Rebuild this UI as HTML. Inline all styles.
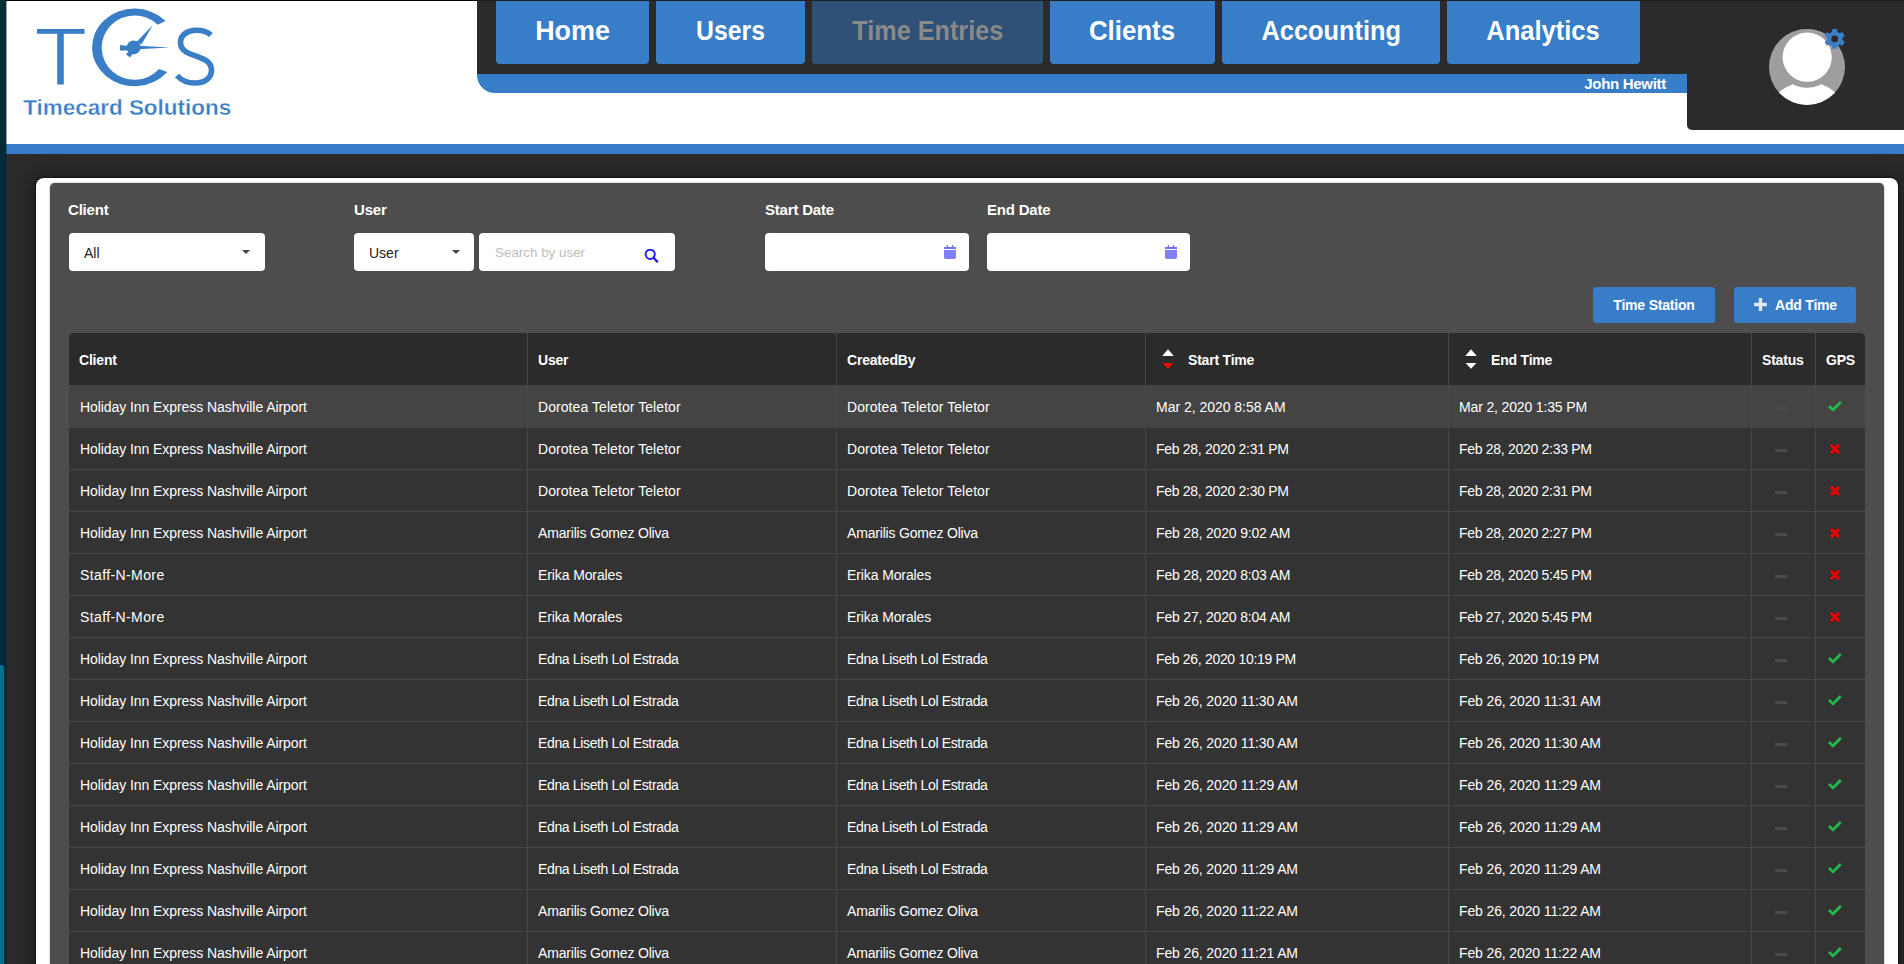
<!DOCTYPE html>
<html><head><meta charset="utf-8">
<style>
*{box-sizing:border-box;margin:0;padding:0}
html,body{width:1904px;height:964px;overflow:hidden;background:#232323;font-family:"Liberation Sans",sans-serif}
.abs{position:absolute}
#strip{left:0;top:0;width:6px;height:964px;background:#032b38}
#strip1{left:6px;top:0;width:1px;height:964px;background:rgba(3,43,56,0.45);z-index:5}
#strip2{left:0;top:665px;width:4px;height:300px;background:#00708f;border-radius:0 2px 0 0}
#hdr{left:6px;top:0;width:1898px;height:144px;background:#fff}
#topline{left:6px;top:0;width:1898px;height:1px;background:linear-gradient(to right,#050505 0,#050505 471px,#1e1e1e 471px);z-index:6}
#hbar{left:6px;top:144px;width:1898px;height:10px;background:#377dc8}
#body{left:6px;top:154px;width:1898px;height:810px;background:#2b2b2b;overflow:hidden}
#nav{left:477px;top:1px;width:1210px;height:73px;background:#2b2b2b}
#navbar{left:477px;top:74px;width:1210px;height:19px;background:#377dc8;border-bottom-left-radius:18px}
.nb{position:absolute;top:1px;height:63px;background:#377dc8;border-radius:0 0 4px 4px;color:#fff;font-weight:700;font-size:27px;text-align:center;line-height:61px;white-space:nowrap}
.nb span{display:inline-block;transform-origin:50% 50%}
.nb.act{background:#2f5177;color:#8a8a8a}
#jh{left:1500px;top:74px;width:166px;height:19px;text-align:right;color:#fff;font-weight:700;font-size:15px;line-height:19px;letter-spacing:-0.3px}
#prof{left:1687px;top:0;width:217px;height:130px;background:#2b2b2b;border-bottom-left-radius:5px}
#frame{left:36px;top:178px;width:1862px;height:800px;background:#fff;border-radius:8px;box-shadow:0 0 1px 1px rgba(0,0,0,0.5),0 0 22px 2px rgba(0,0,0,0.45)}
#panel{left:50px;top:183px;width:1834px;height:800px;background:#4d4d4d;border-radius:5px;box-shadow:0 0 1.5px rgba(0,0,0,0.6)}
.lbl{position:absolute;top:201px;color:#fff;font-weight:700;font-size:15px;line-height:18px;letter-spacing:-0.2px}
.inp{position:absolute;top:233px;height:38px;background:#fff;border-radius:4px}
.inp .t{position:absolute;left:15px;top:1px;line-height:38px;font-size:14px;color:#222}
.caret{position:absolute;width:0;height:0;border-left:4px solid transparent;border-right:4px solid transparent;border-top:4px solid #444;top:17px}
.cal{position:absolute;top:12px}
.btn{position:absolute;top:287px;height:36px;background:#377dc8;border-radius:3px;color:#fff;font-weight:700;font-size:14px;line-height:36px;text-align:center;letter-spacing:-0.2px}
#tbl{left:69px;top:333px;width:1796px;height:640px;background:#333;border-radius:5px 5px 0 0;overflow:hidden}
#thead{position:absolute;left:0;top:0;width:1796px;height:52px;background:#2b2b2b}
.th{position:absolute;top:1px;height:52px;line-height:52px;color:#fff;font-weight:700;font-size:14px;letter-spacing:-0.2px;white-space:nowrap}
.vs{position:absolute;top:0;width:1px;height:640px;background:#474747;z-index:2}
.hovbg{position:absolute;left:0;top:52px;width:1796px;height:42px;background:#444}
.hl{position:absolute;left:0;width:1796px;height:1px;background:#474747}
.td{position:absolute;line-height:41px;color:#fff;font-size:14px;white-space:nowrap}
.dash{position:absolute;left:1706px;width:12px;height:3px;background:#4b4b4b}
.gps{position:absolute;left:1758px}
.gpsx{position:absolute;left:1760px}
.sort{position:absolute;top:16px}
</style></head><body>
<div id="strip" class="abs"></div>
<div id="strip1" class="abs"></div>
<div id="strip2" class="abs"></div>
<div id="hdr" class="abs"></div>
<div id="topline" class="abs"></div>
<div id="hbar" class="abs"></div>
<div id="body" class="abs"></div>

<!-- logo -->
<svg class="abs" style="left:20px;top:0" width="230" height="130" viewBox="20 0 230 130">
  <g fill="#3a7ec8">
    <rect x="37" y="29" width="47.5" height="4.8"/>
    <rect x="57.2" y="29" width="6.6" height="55.5"/>
  </g>
  <path d="M165.5 20.9 A42.4 38.8 0 1 0 167.3 72 L159 69 A32.8 32.2 0 1 1 157.7 24.8 Z" fill="#3a7ec8"/>
  <g fill="#3a7ec8">
    <circle cx="133.6" cy="47.4" r="7"/>
    <path d="M136.5 42 L152.8 25 L141.5 44.5 Z"/>
    <path d="M138 45.8 L169.7 47.4 L138 49.3 Z"/>
    <path d="M120 45.1 L128 46 L128 50.6 L120 50.6 Z"/>
    <path d="M125.9 54.2 L130 57.4 L132.7 53.8 L128.6 51.5 Z"/>
  </g>
  <path d="M211 35 C207 31.5 201.5 30.3 196 30.3 C188 30.3 180.5 34.5 180.5 42.5 C180.5 51 189 53.5 196 56 C204 59 211.5 61.5 211.5 70 C211.5 78.5 204 83 195 83 C187.5 83 181 80 177 75.5" fill="none" stroke="#3a7ec8" stroke-width="5.6"/>
  <text x="23.2" y="114.6" font-family="Liberation Sans" font-weight="700" font-size="22" fill="#3a7ec8" stroke="#fff" stroke-width="0.3" textLength="208" lengthAdjust="spacingAndGlyphs">Timecard Solutions</text>
</svg>

<div id="nav" class="abs"></div>
<div id="navbar" class="abs"></div>
<div class="nb" style="left:496px;width:153px"><span style="transform:scaleX(0.996)">Home</span></div>
<div class="nb" style="left:656px;width:149px"><span style="transform:scaleX(0.918)">Users</span></div>
<div class="nb act" style="left:812px;width:231px"><span style="transform:scaleX(0.934)">Time Entries</span></div>
<div class="nb" style="left:1050px;width:165px"><span style="transform:scaleX(0.957)">Clients</span></div>
<div class="nb" style="left:1222px;width:218px"><span style="transform:scaleX(0.939)">Accounting</span></div>
<div class="nb" style="left:1447px;width:193px"><span style="transform:scaleX(0.945)">Analytics</span></div>
<div id="jh" class="abs">John Hewitt</div>
<div id="prof" class="abs"></div>
<!-- avatar -->
<svg class="abs" style="left:1760px;top:20px" width="100" height="100" viewBox="1760 20 100 100">
  <defs><clipPath id="av"><circle cx="1807" cy="67" r="38"/></clipPath></defs>
  <circle cx="1807" cy="67" r="38" fill="#9e9e9e"/>
  <ellipse cx="1807" cy="112" rx="37" ry="30" fill="#fff" clip-path="url(#av)"/>
  <circle cx="1807" cy="57.3" r="30.4" fill="#9e9e9e" clip-path="url(#av)"/>
  <circle cx="1807.2" cy="57.2" r="24.6" fill="#fff"/>
  <g transform="translate(1834.7 38.9)">
    <path fill="#3a7ec8" d="M-2.2 -9.8 L2.2 -9.8 L2.8 -7 L5.2 -5.7 L7.8 -6.8 L10 -3 L7.8 -1.2 L7.8 1.2 L10 3 L7.8 6.8 L5.2 5.7 L2.8 7 L2.2 9.8 L-2.2 9.8 L-2.8 7 L-5.2 5.7 L-7.8 6.8 L-10 3 L-7.8 1.2 L-7.8 -1.2 L-10 -3 L-7.8 -6.8 L-5.2 -5.7 L-2.8 -7 Z"/>
    <circle r="3.4" fill="#2b2b2b"/>
  </g>
</svg>

<div id="frame" class="abs"></div>
<div id="panel" class="abs"></div>

<!-- filters -->
<div class="lbl" style="left:68px">Client</div>
<div class="inp" style="left:69px;width:196px"><span class="t">All</span><span class="caret" style="left:173px"></span></div>
<div class="lbl" style="left:354px">User</div>
<div class="inp" style="left:354px;width:120px"><span class="t">User</span><span class="caret" style="left:98px"></span></div>
<div class="inp" style="left:479px;width:196px"><span class="t" style="left:16px;color:#bdbdbd;font-size:13.4px">Search by user</span>
  <svg style="position:absolute;left:164px;top:16px" width="16" height="15" viewBox="0 0 16 15"><circle cx="7.2" cy="5.3" r="4.6" fill="none" stroke="#2222ff" stroke-width="2"/><path d="M10.6 8.7 L14.2 12.6" stroke="#2222ff" stroke-width="2.4" stroke-linecap="round"/></svg>
</div>
<div class="lbl" style="left:765px">Start Date</div>
<div class="inp" style="left:765px;width:204px">
  <svg class="cal" style="left:179px" width="12" height="14" viewBox="0 0 12 14"><rect x="2.8" y="0" width="1.3" height="3" rx="0.6" fill="#7070f8"/><rect x="7.9" y="0" width="1.3" height="3" rx="0.6" fill="#7070f8"/><rect x="0" y="2" width="12" height="2" rx="0.3" fill="#7070f8"/><path d="M0 5 H12 V12.3 Q12 14 10.3 14 H1.7 Q0 14 0 12.3 Z" fill="#8080ff"/></svg>
</div>
<div class="lbl" style="left:987px">End Date</div>
<div class="inp" style="left:987px;width:203px">
  <svg class="cal" style="left:178px" width="12" height="14" viewBox="0 0 12 14"><rect x="2.8" y="0" width="1.3" height="3" rx="0.6" fill="#7070f8"/><rect x="7.9" y="0" width="1.3" height="3" rx="0.6" fill="#7070f8"/><rect x="0" y="2" width="12" height="2" rx="0.3" fill="#7070f8"/><path d="M0 5 H12 V12.3 Q12 14 10.3 14 H1.7 Q0 14 0 12.3 Z" fill="#8080ff"/></svg>
</div>

<div class="btn" style="left:1593px;width:122px">Time Station</div>
<div class="btn" style="left:1734px;width:122px;text-align:left;padding-left:41px">Add Time
  <svg style="position:absolute;left:20px;top:11px" width="13" height="13" viewBox="0 0 13 13"><rect x="4.8" y="0" width="3.4" height="13" rx="0.6" fill="#e0e8f4"/><rect x="0" y="4.8" width="13" height="3.4" rx="0.6" fill="#e0e8f4"/></svg>
</div>

<!-- table -->
<div id="tbl" class="abs">
  <div id="thead">
    <div class="th" style="left:10px">Client</div>
    <div class="th" style="left:469px">User</div>
    <div class="th" style="left:778px">CreatedBy</div>
    <svg class="sort" style="left:1093px" width="12" height="20" viewBox="0 0 12 20"><path d="M6 0.3 L11.8 7 L0.2 7 Z" fill="#fff"/><path d="M0.6 14 L11.4 14 L6 19.8 Z" fill="#f00"/></svg>
    <div class="th" style="left:1119px">Start Time</div>
    <svg class="sort" style="left:1396px" width="12" height="20" viewBox="0 0 12 20"><path d="M6 0.3 L11.8 7 L0.2 7 Z" fill="#fff"/><path d="M0.6 14 L11.4 14 L6 19.8 Z" fill="#fff"/></svg>
    <div class="th" style="left:1422px">End Time</div>
    <div class="th" style="left:1693px">Status</div>
    <div class="th" style="left:1757px">GPS</div>
  </div>
  <div class="hovbg"></div>
<div class="hl" style="top:94px"></div>
<div class="hl" style="top:136px"></div>
<div class="hl" style="top:178px"></div>
<div class="hl" style="top:220px"></div>
<div class="hl" style="top:262px"></div>
<div class="hl" style="top:304px"></div>
<div class="hl" style="top:346px"></div>
<div class="hl" style="top:388px"></div>
<div class="hl" style="top:430px"></div>
<div class="hl" style="top:472px"></div>
<div class="hl" style="top:514px"></div>
<div class="hl" style="top:556px"></div>
<div class="hl" style="top:598px"></div>
<div class="hl" style="top:640px"></div>
<div class="td" style="left:11px;top:54px;letter-spacing:-0.072px">Holiday Inn Express Nashville Airport</div>
<div class="td" style="left:469px;top:54px;letter-spacing:0.068px">Dorotea Teletor Teletor</div>
<div class="td" style="left:778px;top:54px;letter-spacing:0.068px">Dorotea Teletor Teletor</div>
<div class="td" style="left:1087px;top:54px;letter-spacing:-0.022px">Mar 2, 2020 8:58 AM</div>
<div class="td" style="left:1390px;top:54px;letter-spacing:-0.150px">Mar 2, 2020 1:35 PM</div>
<div class="dash" style="top:74px"></div>
<svg class="gps" style="top:67px" width="16" height="14" viewBox="0 0 16 14"><path d="M2.0 6.0 L6.0 9.9 L13.8 2.1" fill="none" stroke="#20bb48" stroke-width="2.8"/></svg>
<div class="td" style="left:11px;top:96px;letter-spacing:-0.072px">Holiday Inn Express Nashville Airport</div>
<div class="td" style="left:469px;top:96px;letter-spacing:0.068px">Dorotea Teletor Teletor</div>
<div class="td" style="left:778px;top:96px;letter-spacing:0.068px">Dorotea Teletor Teletor</div>
<div class="td" style="left:1087px;top:96px;letter-spacing:-0.295px">Feb 28, 2020 2:31 PM</div>
<div class="td" style="left:1390px;top:96px;letter-spacing:-0.295px">Feb 28, 2020 2:33 PM</div>
<div class="dash" style="top:116px"></div>
<svg class="gpsx" style="top:110px" width="12" height="12" viewBox="0 0 12 12"><path d="M1.9 1.9 L10.1 10.1 M10.1 1.9 L1.9 10.1" fill="none" stroke="#e80000" stroke-width="3.1"/></svg>
<div class="td" style="left:11px;top:138px;letter-spacing:-0.072px">Holiday Inn Express Nashville Airport</div>
<div class="td" style="left:469px;top:138px;letter-spacing:0.068px">Dorotea Teletor Teletor</div>
<div class="td" style="left:778px;top:138px;letter-spacing:0.068px">Dorotea Teletor Teletor</div>
<div class="td" style="left:1087px;top:138px;letter-spacing:-0.295px">Feb 28, 2020 2:30 PM</div>
<div class="td" style="left:1390px;top:138px;letter-spacing:-0.295px">Feb 28, 2020 2:31 PM</div>
<div class="dash" style="top:158px"></div>
<svg class="gpsx" style="top:152px" width="12" height="12" viewBox="0 0 12 12"><path d="M1.9 1.9 L10.1 10.1 M10.1 1.9 L1.9 10.1" fill="none" stroke="#e80000" stroke-width="3.1"/></svg>
<div class="td" style="left:11px;top:180px;letter-spacing:-0.072px">Holiday Inn Express Nashville Airport</div>
<div class="td" style="left:469px;top:180px;letter-spacing:-0.184px">Amarilis Gomez Oliva</div>
<div class="td" style="left:778px;top:180px;letter-spacing:-0.184px">Amarilis Gomez Oliva</div>
<div class="td" style="left:1087px;top:180px;letter-spacing:-0.174px">Feb 28, 2020 9:02 AM</div>
<div class="td" style="left:1390px;top:180px;letter-spacing:-0.295px">Feb 28, 2020 2:27 PM</div>
<div class="dash" style="top:200px"></div>
<svg class="gpsx" style="top:194px" width="12" height="12" viewBox="0 0 12 12"><path d="M1.9 1.9 L10.1 10.1 M10.1 1.9 L1.9 10.1" fill="none" stroke="#e80000" stroke-width="3.1"/></svg>
<div class="td" style="left:11px;top:222px;letter-spacing:0.391px">Staff-N-More</div>
<div class="td" style="left:469px;top:222px;letter-spacing:-0.108px">Erika Morales</div>
<div class="td" style="left:778px;top:222px;letter-spacing:-0.108px">Erika Morales</div>
<div class="td" style="left:1087px;top:222px;letter-spacing:-0.174px">Feb 28, 2020 8:03 AM</div>
<div class="td" style="left:1390px;top:222px;letter-spacing:-0.295px">Feb 28, 2020 5:45 PM</div>
<div class="dash" style="top:242px"></div>
<svg class="gpsx" style="top:236px" width="12" height="12" viewBox="0 0 12 12"><path d="M1.9 1.9 L10.1 10.1 M10.1 1.9 L1.9 10.1" fill="none" stroke="#e80000" stroke-width="3.1"/></svg>
<div class="td" style="left:11px;top:264px;letter-spacing:0.391px">Staff-N-More</div>
<div class="td" style="left:469px;top:264px;letter-spacing:-0.108px">Erika Morales</div>
<div class="td" style="left:778px;top:264px;letter-spacing:-0.108px">Erika Morales</div>
<div class="td" style="left:1087px;top:264px;letter-spacing:-0.174px">Feb 27, 2020 8:04 AM</div>
<div class="td" style="left:1390px;top:264px;letter-spacing:-0.295px">Feb 27, 2020 5:45 PM</div>
<div class="dash" style="top:284px"></div>
<svg class="gpsx" style="top:278px" width="12" height="12" viewBox="0 0 12 12"><path d="M1.9 1.9 L10.1 10.1 M10.1 1.9 L1.9 10.1" fill="none" stroke="#e80000" stroke-width="3.1"/></svg>
<div class="td" style="left:11px;top:306px;letter-spacing:-0.072px">Holiday Inn Express Nashville Airport</div>
<div class="td" style="left:469px;top:306px;letter-spacing:-0.355px">Edna Liseth Lol Estrada</div>
<div class="td" style="left:778px;top:306px;letter-spacing:-0.355px">Edna Liseth Lol Estrada</div>
<div class="td" style="left:1087px;top:306px;letter-spacing:-0.305px">Feb 26, 2020 10:19 PM</div>
<div class="td" style="left:1390px;top:306px;letter-spacing:-0.305px">Feb 26, 2020 10:19 PM</div>
<div class="dash" style="top:326px"></div>
<svg class="gps" style="top:319px" width="16" height="14" viewBox="0 0 16 14"><path d="M2.0 6.0 L6.0 9.9 L13.8 2.1" fill="none" stroke="#20bb48" stroke-width="2.8"/></svg>
<div class="td" style="left:11px;top:348px;letter-spacing:-0.072px">Holiday Inn Express Nashville Airport</div>
<div class="td" style="left:469px;top:348px;letter-spacing:-0.355px">Edna Liseth Lol Estrada</div>
<div class="td" style="left:778px;top:348px;letter-spacing:-0.355px">Edna Liseth Lol Estrada</div>
<div class="td" style="left:1087px;top:348px;letter-spacing:-0.125px">Feb 26, 2020 11:30 AM</div>
<div class="td" style="left:1390px;top:348px;letter-spacing:-0.125px">Feb 26, 2020 11:31 AM</div>
<div class="dash" style="top:368px"></div>
<svg class="gps" style="top:361px" width="16" height="14" viewBox="0 0 16 14"><path d="M2.0 6.0 L6.0 9.9 L13.8 2.1" fill="none" stroke="#20bb48" stroke-width="2.8"/></svg>
<div class="td" style="left:11px;top:390px;letter-spacing:-0.072px">Holiday Inn Express Nashville Airport</div>
<div class="td" style="left:469px;top:390px;letter-spacing:-0.355px">Edna Liseth Lol Estrada</div>
<div class="td" style="left:778px;top:390px;letter-spacing:-0.355px">Edna Liseth Lol Estrada</div>
<div class="td" style="left:1087px;top:390px;letter-spacing:-0.125px">Feb 26, 2020 11:30 AM</div>
<div class="td" style="left:1390px;top:390px;letter-spacing:-0.125px">Feb 26, 2020 11:30 AM</div>
<div class="dash" style="top:410px"></div>
<svg class="gps" style="top:403px" width="16" height="14" viewBox="0 0 16 14"><path d="M2.0 6.0 L6.0 9.9 L13.8 2.1" fill="none" stroke="#20bb48" stroke-width="2.8"/></svg>
<div class="td" style="left:11px;top:432px;letter-spacing:-0.072px">Holiday Inn Express Nashville Airport</div>
<div class="td" style="left:469px;top:432px;letter-spacing:-0.355px">Edna Liseth Lol Estrada</div>
<div class="td" style="left:778px;top:432px;letter-spacing:-0.355px">Edna Liseth Lol Estrada</div>
<div class="td" style="left:1087px;top:432px;letter-spacing:-0.125px">Feb 26, 2020 11:29 AM</div>
<div class="td" style="left:1390px;top:432px;letter-spacing:-0.125px">Feb 26, 2020 11:29 AM</div>
<div class="dash" style="top:452px"></div>
<svg class="gps" style="top:445px" width="16" height="14" viewBox="0 0 16 14"><path d="M2.0 6.0 L6.0 9.9 L13.8 2.1" fill="none" stroke="#20bb48" stroke-width="2.8"/></svg>
<div class="td" style="left:11px;top:474px;letter-spacing:-0.072px">Holiday Inn Express Nashville Airport</div>
<div class="td" style="left:469px;top:474px;letter-spacing:-0.355px">Edna Liseth Lol Estrada</div>
<div class="td" style="left:778px;top:474px;letter-spacing:-0.355px">Edna Liseth Lol Estrada</div>
<div class="td" style="left:1087px;top:474px;letter-spacing:-0.125px">Feb 26, 2020 11:29 AM</div>
<div class="td" style="left:1390px;top:474px;letter-spacing:-0.125px">Feb 26, 2020 11:29 AM</div>
<div class="dash" style="top:494px"></div>
<svg class="gps" style="top:487px" width="16" height="14" viewBox="0 0 16 14"><path d="M2.0 6.0 L6.0 9.9 L13.8 2.1" fill="none" stroke="#20bb48" stroke-width="2.8"/></svg>
<div class="td" style="left:11px;top:516px;letter-spacing:-0.072px">Holiday Inn Express Nashville Airport</div>
<div class="td" style="left:469px;top:516px;letter-spacing:-0.355px">Edna Liseth Lol Estrada</div>
<div class="td" style="left:778px;top:516px;letter-spacing:-0.355px">Edna Liseth Lol Estrada</div>
<div class="td" style="left:1087px;top:516px;letter-spacing:-0.125px">Feb 26, 2020 11:29 AM</div>
<div class="td" style="left:1390px;top:516px;letter-spacing:-0.125px">Feb 26, 2020 11:29 AM</div>
<div class="dash" style="top:536px"></div>
<svg class="gps" style="top:529px" width="16" height="14" viewBox="0 0 16 14"><path d="M2.0 6.0 L6.0 9.9 L13.8 2.1" fill="none" stroke="#20bb48" stroke-width="2.8"/></svg>
<div class="td" style="left:11px;top:558px;letter-spacing:-0.072px">Holiday Inn Express Nashville Airport</div>
<div class="td" style="left:469px;top:558px;letter-spacing:-0.184px">Amarilis Gomez Oliva</div>
<div class="td" style="left:778px;top:558px;letter-spacing:-0.184px">Amarilis Gomez Oliva</div>
<div class="td" style="left:1087px;top:558px;letter-spacing:-0.125px">Feb 26, 2020 11:22 AM</div>
<div class="td" style="left:1390px;top:558px;letter-spacing:-0.125px">Feb 26, 2020 11:22 AM</div>
<div class="dash" style="top:578px"></div>
<svg class="gps" style="top:571px" width="16" height="14" viewBox="0 0 16 14"><path d="M2.0 6.0 L6.0 9.9 L13.8 2.1" fill="none" stroke="#20bb48" stroke-width="2.8"/></svg>
<div class="td" style="left:11px;top:600px;letter-spacing:-0.072px">Holiday Inn Express Nashville Airport</div>
<div class="td" style="left:469px;top:600px;letter-spacing:-0.184px">Amarilis Gomez Oliva</div>
<div class="td" style="left:778px;top:600px;letter-spacing:-0.184px">Amarilis Gomez Oliva</div>
<div class="td" style="left:1087px;top:600px;letter-spacing:-0.125px">Feb 26, 2020 11:21 AM</div>
<div class="td" style="left:1390px;top:600px;letter-spacing:-0.125px">Feb 26, 2020 11:22 AM</div>
<div class="dash" style="top:620px"></div>
<svg class="gps" style="top:613px" width="16" height="14" viewBox="0 0 16 14"><path d="M2.0 6.0 L6.0 9.9 L13.8 2.1" fill="none" stroke="#20bb48" stroke-width="2.8"/></svg>
  <div class="vs" style="left:458px"></div>
  <div class="vs" style="left:767px"></div>
  <div class="vs" style="left:1076px"></div>
  <div class="vs" style="left:1379px"></div>
  <div class="vs" style="left:1682px"></div>
  <div class="vs" style="left:1746px"></div>
</div>
</body></html>
